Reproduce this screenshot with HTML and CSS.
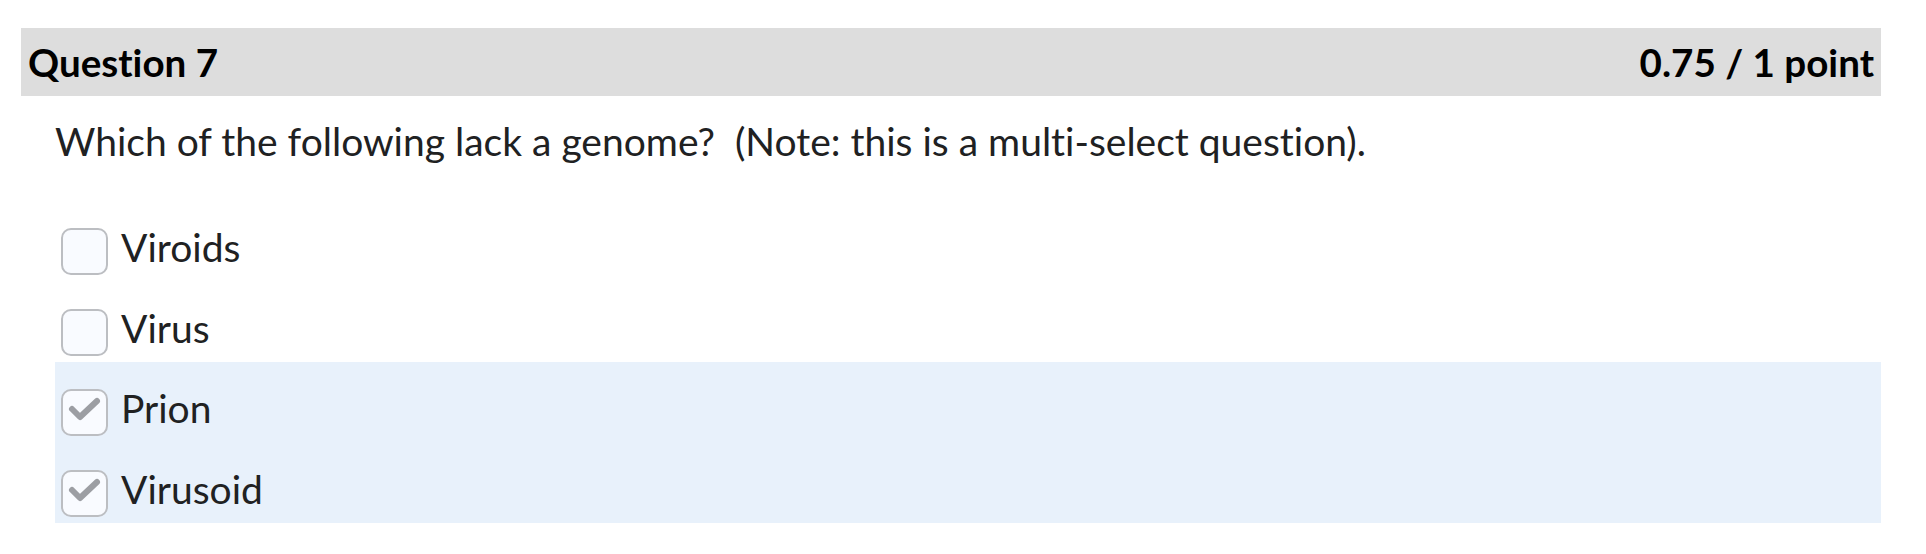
FILE: index.html
```html
<!DOCTYPE html>
<html lang="en">
<head>
<meta charset="utf-8">
<title>Question 7</title>
<link rel="stylesheet" href="styles.css">
</head>
<body>
<div class="question">
  <div class="q-header">
    <span class="q-title">Question 7</span>
    <span class="q-points">0.75 / 1 point</span>
  </div>
  <div class="q-body">
    <p class="q-text">Which of the following lack a genome?&nbsp; (Note: this is a multi-select question).</p>
    <ul class="options">
      <li class="option">
        <span class="box"></span>
        <span class="label">Viroids</span>
      </li>
      <li class="option">
        <span class="box"></span>
        <span class="label">Virus</span>
      </li>
      <li class="option selected">
        <span class="box">
          <svg class="check" viewBox="0 0 47 47" width="47" height="47"><path d="M11 20 L19 28 L36 12"/></svg>
        </span>
        <span class="label">Prion</span>
      </li>
      <li class="option selected">
        <span class="box">
          <svg class="check" viewBox="0 0 47 47" width="47" height="47"><path d="M11 20 L19 28 L36 12"/></svg>
        </span>
        <span class="label">Virusoid</span>
      </li>
    </ul>
  </div>
</div>
</body>
</html>
```

FILE: styles.css
```css
html, body {
  margin: 0;
  padding: 0;
  background: #ffffff;
}

body {
  font-family: Lato, "Open Sans", "Liberation Sans", sans-serif;
  color: #202122;
  font-variant-ligatures: none;
}

.question {
  margin: 28px 45px 0 21px;
}

.q-header {
  display: flex;
  justify-content: space-between;
  align-items: center;
  height: 68px;
  padding: 0 7px;
  background: #dddddd;
  color: #000000;
  font-weight: 700;
  font-size: 38.6px;
  line-height: 46px;
}

.q-body {
  padding-left: 34px;
}

.q-text {
  margin: 0;
  padding: 22px 0 0 0;
  font-size: 39px;
  line-height: 46px;
}

.options {
  list-style: none;
  margin: 37px 0 0 0;
  padding: 0;
}

.option {
  display: flex;
  align-items: flex-start;
  height: 80.5px;
  box-sizing: border-box;
  padding: 22px 0 0 6px;
}

.option.selected {
  background: #e8f1fb;
}

.box {
  width: 47px;
  height: 47px;
  margin-top: 5px;
  box-sizing: border-box;
  border: 2px solid #bcbec2;
  border-radius: 10px;
  background: #f9fbff;
  position: relative;
  flex: none;
}

.check {
  position: absolute;
  left: -2px;
  top: -2px;
  fill: none;
  stroke: #9c9ea3;
  stroke-width: 6;
  stroke-linecap: round;
  stroke-linejoin: round;
}

.label {
  margin-left: 13px;
  font-size: 39px;
  line-height: 48px;
}
```
